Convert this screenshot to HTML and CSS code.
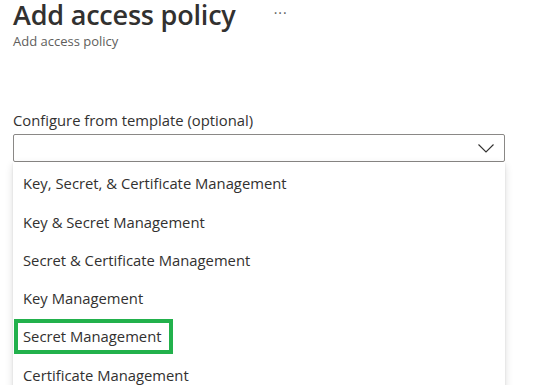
FILE: index.html
```html
<!DOCTYPE html>
<html>
<head>
<meta charset="utf-8">
<link rel="stylesheet" href="styles.css">
</head>
<body>
<div class="page">
  <div class="header">
    <h1 class="title">Add access policy</h1>
    <span class="more">···</span>
  </div>
  <div class="subtitle">Add access policy</div>
  <div class="field">
    <label class="label">Configure from template (optional)</label>
    <div class="select">
      <svg class="chev" width="16" height="9" viewBox="0 0 16 9"><path d="M0.5 0.5 L8 8 L15.5 0.5" fill="none" stroke="#323130" stroke-width="1.1"/></svg>
    </div>
    <ul class="list">
      <li class="item">Key, Secret, &amp; Certificate Management</li>
      <li class="item">Key &amp; Secret Management</li>
      <li class="item">Secret &amp; Certificate Management</li>
      <li class="item">Key Management</li>
      <li class="item"><span class="mark">Secret Management</span></li>
      <li class="item">Certificate Management</li>
    </ul>
  </div>
</div>
</body>
</html>
```
FILE: styles.css
```css
html, body {
  margin: 0;
  padding: 0;
  background: #fff;
  overflow: hidden;
}
body {
  font-family: "Open Sans", "Noto Sans", sans-serif;
  color: #323130;
}
.page {
  padding: 0 35px 0 13px;
}
.header {
  display: flex;
  align-items: flex-start;
  gap: 38px;
  height: 32px;
}
.title {
  margin: 0;
  font-size: 27px;
  font-weight: 600;
  line-height: 28px;
  padding-top: 1px;
  color: #323130;
  letter-spacing: -0.2px;
}
.more {
  font-size: 14px;
  line-height: 14px;
  letter-spacing: 1px;
  margin-top: 6px;
  color: #605e5c;
}
.subtitle {
  font-size: 13px;
  line-height: 18px;
  margin-top: 0;
  color: #605e5c;
}
.field {
  margin-top: 60px;
}
.label {
  display: block;
  font-size: 14.8px;
  line-height: 20px;
}
.select {
  margin-top: 4px;
  height: 26px;
  border: 1px solid #8a8886;
  border-radius: 2px;
  display: flex;
  align-items: center;
  justify-content: flex-end;
  padding-right: 10px;
}
.chev {
  display: block;
}
.list {
  list-style: none;
  margin: 0;
  padding: 2px 0 0 0;
  background: #fff;
  box-shadow: 0 3px 8px rgba(0,0,0,0.14), 0 0.6px 1.8px rgba(0,0,0,0.1);
}
.item {
  height: 38.4px;
  display: flex;
  align-items: center;
  padding-left: 10px;
  font-size: 14.8px;
}
.mark {
  border: 4px solid #22b14c;
  padding: 3px 7px 4px 5px;
  margin-left: -9px;
}
```
